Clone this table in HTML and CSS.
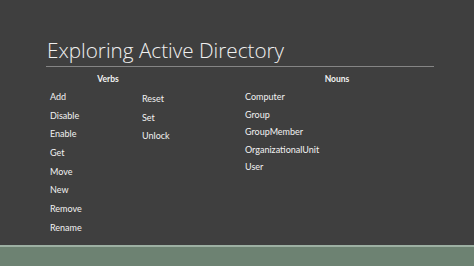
FILE: index.html
```html
<html>
  <head>
    <meta charset="utf-8" />
    <title>Exploring Active Directory</title>
    <link rel="stylesheet" href="styles.css">
  </head>
  <body>
    <main class="slide">
      <h1 class="title">Exploring Active Directory</h1>
      <div class="rule"></div>
      <div class="tables">
        <section class="verbs">
          <div class="head">Verbs</div>
          <div class="cols">
            <ul class="list">
              <li>Add</li>
              <li>Disable</li>
              <li>Enable</li>
              <li>Get</li>
              <li>Move</li>
              <li>New</li>
              <li>Remove</li>
              <li>Rename</li>
            </ul>
            <ul class="list second">
              <li>Reset</li>
              <li>Set</li>
              <li>Unlock</li>
            </ul>
          </div>
        </section>
        <section class="nouns">
          <div class="head">Nouns</div>
          <ul class="list tight">
            <li>Computer</li>
            <li>Group</li>
            <li>GroupMember</li>
            <li>OrganizationalUnit</li>
            <li>User</li>
          </ul>
        </section>
      </div>
    </main>
    <footer class="band"></footer>
  </body>
</html>
```

FILE: styles.css
```css
html, body {
  height: 100%;
  margin: 0;
}

body {
  display: flex;
  flex-direction: column;
  background-color: #3f3f3f;
  color: #f2f2f2;
  font-family: Lato, "Open Sans", sans-serif;
  overflow: hidden;
}

.slide {
  flex: 1 1 0;
  padding: 0 40px 0 46px;
}

.title {
  margin: 37px 0 0 1px;
  font-family: "Open Sans", sans-serif;
  font-weight: 300;
  font-size: 20.7px;
  line-height: 27px;
  color: #f0f0f0;
}

.rule {
  height: 1px;
  margin-top: 2px;
  background-color: #858585;
}

.tables {
  display: flex;
}

.head {
  text-align: center;
  font-weight: bold;
  font-size: 8.5px;
  line-height: 12px;
  margin-top: 6px;
}

.verbs {
  width: 124px;
}

.nouns {
  width: 194px;
  margin-left: 70px;
}

.cols {
  display: grid;
  grid-template-columns: 96px auto;
}

.list {
  list-style: none;
  margin: 0;
  padding: 6px 0 0 4px;
  font-size: 9px;
}

.list li {
  height: 18.7px;
  line-height: 12px;
}

.second {
  padding-left: 0;
  padding-top: 8px;
}

.nouns .list {
  padding-left: 5px;
  padding-top: 6px;
}

.tight li {
  height: 17.6px;
}

.band {
  height: 19px;
  background-color: #6d8272;
  border-top: 2px solid #9db0a3;
}
```
